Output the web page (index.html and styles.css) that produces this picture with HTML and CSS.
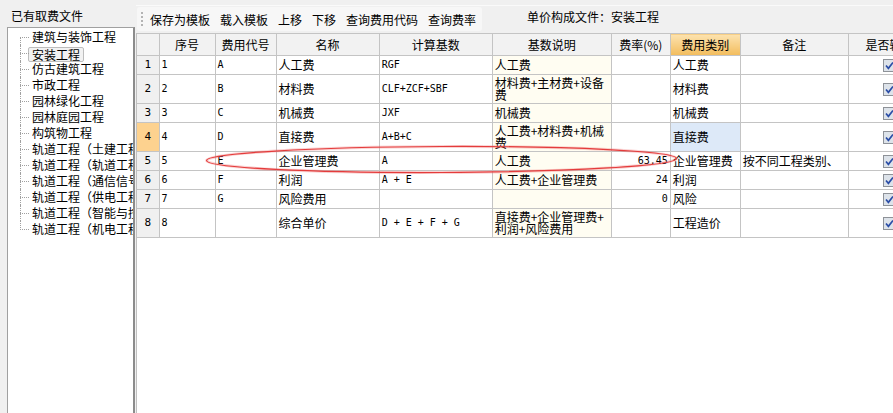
FILE: index.html
```html
<!DOCTYPE html>
<html lang="zh-CN">
<head>
    <meta charset="UTF-8">
    <meta name="viewport" content="width=device-width, initial-scale=1.0">
    <title>单价构成</title>
    <link rel="stylesheet" href="styles.css">
</head>
<body>
    <div class="app">
        <aside class="side">
            <div class="side-title">已有取费文件</div>
            <div class="tree">
                <ul class="tree-list">
                    <li>建筑与装饰工程</li>
                    <li><span class="tree-sel">安装工程</span></li>
                    <li>仿古建筑工程</li>
                    <li>市政工程</li>
                    <li>园林绿化工程</li>
                    <li>园林庭园工程</li>
                    <li>构筑物工程</li>
                    <li>轨道工程（土建工程）</li>
                    <li>轨道工程（轨道工程）</li>
                    <li>轨道工程（通信信号工程）</li>
                    <li>轨道工程（供电工程）</li>
                    <li>轨道工程（智能与控制系统工程）</li>
                    <li>轨道工程（机电工程）</li>
                </ul>
            </div>
        </aside>

        <main class="main">
            <div class="topbar">
                <div class="toolbar">
                    <span class="grip"></span>
                    <button class="tool" type="button">保存为模板</button>
                    <button class="tool" type="button">载入模板</button>
                    <button class="tool" type="button">上移</button>
                    <button class="tool" type="button">下移</button>
                    <button class="tool" type="button">查询费用代码</button>
                    <button class="tool" type="button">查询费率</button>
                </div>
                <div class="file-label">单价构成文件：安装工程</div>
            </div>

            <div class="grid">
                <table class="fee-table">
                    <colgroup>
                        <col class="c-idx">
                        <col class="c-no">
                        <col class="c-code">
                        <col class="c-name">
                        <col class="c-base">
                        <col class="c-desc">
                        <col class="c-rate">
                        <col class="c-type">
                        <col class="c-note">
                        <col class="c-out">
                    </colgroup>
                    <thead>
                        <tr class="r-head">
                            <th></th>
                            <th>序号</th>
                            <th>费用代号</th>
                            <th>名称</th>
                            <th>计算基数</th>
                            <th>基数说明</th>
                            <th>费率(%)</th>
                            <th class="th-active">费用类别</th>
                            <th>备注</th>
                            <th>是否输出</th>
                        </tr>
                    </thead>
                    <tbody>
                        <tr class="r1">
                            <td class="idx mono">1</td><td class="mono">1</td><td class="mono">A</td>
                            <td>人工费</td><td class="mono">RGF</td><td class="desc">人工费</td>
                            <td class="rate mono"></td><td>人工费</td><td></td>
                            <td class="out"><svg class="chk" viewBox="0 0 13 13"><rect x=".5" y=".5" width="12" height="12"/><path d="M3 6.5l2.4 2.8L10 3.5"/></svg></td>
                        </tr>
                        <tr class="r2">
                            <td class="idx mono">2</td><td class="mono">2</td><td class="mono">B</td>
                            <td>材料费</td><td class="mono">CLF+ZCF+SBF</td><td class="desc">材料费+主材费+设备<br>费</td>
                            <td class="rate mono"></td><td>材料费</td><td></td>
                            <td class="out"><svg class="chk" viewBox="0 0 13 13"><rect x=".5" y=".5" width="12" height="12"/><path d="M3 6.5l2.4 2.8L10 3.5"/></svg></td>
                        </tr>
                        <tr class="r1">
                            <td class="idx mono">3</td><td class="mono">3</td><td class="mono">C</td>
                            <td>机械费</td><td class="mono">JXF</td><td class="desc">机械费</td>
                            <td class="rate mono"></td><td>机械费</td><td></td>
                            <td class="out"><svg class="chk" viewBox="0 0 13 13"><rect x=".5" y=".5" width="12" height="12"/><path d="M3 6.5l2.4 2.8L10 3.5"/></svg></td>
                        </tr>
                        <tr class="r2">
                            <td class="idx idx-active mono">4</td><td class="mono">4</td><td class="mono">D</td>
                            <td>直接费</td><td class="mono">A+B+C</td><td class="desc">人工费+材料费+机械<br>费</td>
                            <td class="rate mono"></td><td class="cell-focus">直接费</td><td></td>
                            <td class="out"><svg class="chk" viewBox="0 0 13 13"><rect x=".5" y=".5" width="12" height="12"/><path d="M3 6.5l2.4 2.8L10 3.5"/></svg></td>
                        </tr>
                        <tr class="r1">
                            <td class="idx mono">5</td><td class="mono">5</td><td class="mono">E</td>
                            <td>企业管理费</td><td class="mono">A</td><td class="desc">人工费</td>
                            <td class="rate mono">63.45</td><td>企业管理费</td><td class="note">按不同工程类别、</td>
                            <td class="out"><svg class="chk" viewBox="0 0 13 13"><rect x=".5" y=".5" width="12" height="12"/><path d="M3 6.5l2.4 2.8L10 3.5"/></svg></td>
                        </tr>
                        <tr class="r1">
                            <td class="idx mono">6</td><td class="mono">6</td><td class="mono">F</td>
                            <td>利润</td><td class="mono">A + E</td><td class="desc">人工费+企业管理费</td>
                            <td class="rate mono">24</td><td>利润</td><td></td>
                            <td class="out"><svg class="chk" viewBox="0 0 13 13"><rect x=".5" y=".5" width="12" height="12"/><path d="M3 6.5l2.4 2.8L10 3.5"/></svg></td>
                        </tr>
                        <tr class="r1">
                            <td class="idx mono">7</td><td class="mono">7</td><td class="mono">G</td>
                            <td>风险费用</td><td class="mono"></td><td class="desc"></td>
                            <td class="rate mono">0</td><td>风险</td><td></td>
                            <td class="out"><svg class="chk" viewBox="0 0 13 13"><rect x=".5" y=".5" width="12" height="12"/><path d="M3 6.5l2.4 2.8L10 3.5"/></svg></td>
                        </tr>
                        <tr class="r2">
                            <td class="idx mono">8</td><td class="mono">8</td><td class="mono"></td>
                            <td>综合单价</td><td class="mono">D + E + F + G</td><td class="desc">直接费+企业管理费+<br>利润+风险费用</td>
                            <td class="rate mono"></td><td>工程造价</td><td></td>
                            <td class="out"><svg class="chk" viewBox="0 0 13 13"><rect x=".5" y=".5" width="12" height="12"/><path d="M3 6.5l2.4 2.8L10 3.5"/></svg></td>
                        </tr>
                    </tbody>
                </table>
            </div>
        </main>
    </div>

    <!-- red hand-drawn mark over row 5 -->
    <svg class="mark" viewBox="0 0 893 413">
        <ellipse class="mark-glow" cx="441.5" cy="159.5" rx="235" ry="13" transform="rotate(-0.25 441.5 159.5)"/>
        <ellipse class="mark-line" cx="441.5" cy="159.5" rx="235" ry="13" transform="rotate(-0.25 441.5 159.5)"/>
    </svg>
</body>
</html>
```

FILE: styles.css
```css
html, body{
    margin: 0;
    height: 100%;
}

body{
    background-color: #f0f0f0;
    color: #000;
    font: 12px "Noto Sans CJK SC", "Liberation Sans", sans-serif;
    overflow: hidden;
    position: relative;
}

.app{
    display: flex;
    height: 413px;
}

/* left: fee file tree */
.side{
    width: 136px;
    flex: none;
    display: flex;
    flex-direction: column;
}

.side-title{
    padding: 9px 0 0 11px;
    height: 18px;
    line-height: 14px;
}

.tree{
    flex: 1;
    margin: 0 1px 0 7px;
    background-color: #fff;
    border-top: 1px solid #a0a0a0;
    border-left: 1px solid #a0a0a0;
    border-right: 2px solid #8c8c8c;
    overflow: hidden;
}

.tree-list{
    list-style: none;
    margin: 0;
    padding: 1px 0 0 0;
}

.tree-list li{
    position: relative;
    height: 16px;
    line-height: 16px;
    padding-left: 24px;
    white-space: nowrap;
}

.tree-list li::before{
    content: "";
    position: absolute;
    left: 12px;
    top: 8px;
    width: 9px;
    border-top: 1px dotted #a0a0a0;
}

.tree-list li::after{
    content: "";
    position: absolute;
    left: 12px;
    top: 0;
    height: 16px;
    border-left: 1px dotted #a0a0a0;
}

.tree-list li:first-child::after{
    top: 8px;
    height: 8px;
}

.tree-list li:last-child::after{
    height: 9px;
}

.tree-sel{
    display: inline-block;
    margin-left: -4px;
    padding: 0 3px;
    height: 13px;
    line-height: 13px;
    border: 1px solid #bdbdbd;
    border-radius: 2px;
    background-color: #f2f2f2;
    vertical-align: middle;
}

/* right: toolbar + grid */
.main{
    flex: 1;
    display: flex;
    flex-direction: column;
    min-width: 0;
}

.topbar{
    height: 33px;
    box-sizing: border-box;
    padding-top: 7px;
    display: flex;
    align-items: flex-start;
    background: linear-gradient(to bottom, #f0f0f0 0 5px, #fafafa 5px 6px, #f0f0f0 6px);
}

.toolbar{
    height: 24px;
    margin-left: 1px;
    padding: 0 1px 0 4px;
    display: flex;
    align-items: center;
    background-color: #f7f7f7;
    border-radius: 3px;
}

.grip{
    width: 2px;
    height: 14px;
    margin-right: 2px;
    background: repeating-linear-gradient(to bottom, #b4b4b4 0 2px, transparent 2px 4px);
}

.tool{
    border: 0;
    background: none;
    padding: 0 5px;
    font: inherit;
    color: #000;
    height: 22px;
    cursor: pointer;
}

.tool:hover{
    background-color: #e3eefc;
}

.file-label{
    margin-left: 45px;
    height: 22px;
    line-height: 20px;
}

.grid{
    flex: 1;
    background-color: #fff;
    border-left: 1px solid #c0c0c0;
    overflow: hidden;
}

.fee-table{
    table-layout: fixed;
    width: 794px;
    border-collapse: collapse;
    font-size: 12px;
}

.c-idx{ width: 22px; }
.c-no{ width: 56px; }
.c-code{ width: 61px; }
.c-name{ width: 103px; }
.c-base{ width: 113px; }
.c-desc{ width: 119px; }
.c-rate{ width: 59px; }
.c-type{ width: 70px; }
.c-note{ width: 108px; }
.c-out{ width: 82px; }

.fee-table th,
.fee-table td{
    border: 1px solid #c4c4c4;
    padding: 0 2px;
    vertical-align: middle;
    overflow: hidden;
    line-height: 12px;
}

.fee-table tr > :first-child{
    border-left: 0;
}

.fee-table th{
    background-color: #f2f2f2;
    font-weight: normal;
    text-align: center;
    white-space: nowrap;
}

.fee-table th.th-active{
    background: linear-gradient(to bottom, #fde3b0, #f2bc5c);
}

.r-head{ height: 22px; }
.r1{ height: 19px; }
.r2{ height: 29px; }

.mono{
    font-family: "DejaVu Sans Mono", "Liberation Mono", "Noto Sans CJK SC", monospace;
    font-size: 10px;
    white-space: pre;
}

.idx{
    background-color: #f0f0f0;
    text-align: center;
    font-size: 11px;
}

.idx.idx-active{
    background-color: #fdd28f;
}

.desc{
    background-color: #fffdf2;
    white-space: nowrap;
}

.rate{
    text-align: right;
}

.cell-focus{
    background-color: #dde9f8;
}

.note{
    white-space: nowrap;
}

.out{
    text-align: center;
}

.chk{
    display: inline-block;
    width: 13px;
    height: 13px;
    vertical-align: middle;
}

.chk rect{
    fill: #dde3ea;
    stroke: #8e9298;
}

.chk path{
    fill: none;
    stroke: #2a4da6;
    stroke-width: 1.7;
}

/* annotation ellipse */
.mark{
    position: absolute;
    left: 0;
    top: 0;
    width: 893px;
    height: 413px;
    pointer-events: none;
}

.mark-glow{
    fill: none;
    stroke: rgba(240, 110, 110, .3);
    stroke-width: 3;
}

.mark-line{
    fill: none;
    stroke: #e43c3c;
    stroke-width: 1.2;
}
```
